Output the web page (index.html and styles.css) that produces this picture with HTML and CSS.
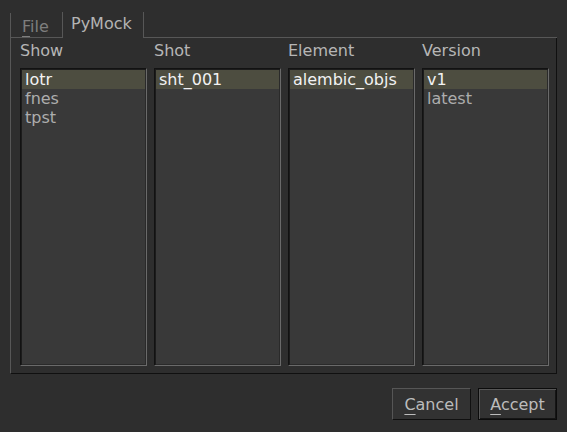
FILE: index.html
```html
<!DOCTYPE html>
<html>
<head>
<meta charset="utf-8">
<link rel="stylesheet" href="styles.css">
</head>
<body>
<div class="dialog">
  <div class="tabbar">
    <div class="tab tab-inactive"><span><u>F</u>ile</span></div>
    <div class="tab tab-active"><span>PyMock</span></div>
    <div class="tab-filler"></div>
  </div>
  <div class="pane">
    <div class="columns">
      <div class="column">
        <div class="label">Show</div>
        <div class="list">
          <div class="item selected">lotr</div>
          <div class="item">fnes</div>
          <div class="item">tpst</div>
        </div>
      </div>
      <div class="column">
        <div class="label">Shot</div>
        <div class="list">
          <div class="item selected">sht_001</div>
        </div>
      </div>
      <div class="column">
        <div class="label">Element</div>
        <div class="list">
          <div class="item selected">alembic_objs</div>
        </div>
      </div>
      <div class="column">
        <div class="label">Version</div>
        <div class="list">
          <div class="item selected">v1</div>
          <div class="item">latest</div>
        </div>
      </div>
    </div>
  </div>
  <div class="buttons">
    <div class="button"><span><u>C</u>ancel</span></div>
    <div class="button default"><span><u>A</u>ccept</span></div>
  </div>
</div>
</body>
</html>
```
FILE: styles.css
```css
html, body {
  margin: 0;
  padding: 0;
  background: #2e2e2e;
}
body {
  width: 567px;
  height: 432px;
  overflow: hidden;
  font-family: "DejaVu Sans", sans-serif;
  font-size: 16px;
}
.dialog {
  padding-top: 12px;
}
u {
  text-decoration: underline;
  text-underline-offset: 4px;
  text-decoration-thickness: 1px;
}
.tabbar {
  display: flex;
  height: 26px;
  margin: 0 10px;
}
.tab {
  box-sizing: border-box;
  line-height: 20px;
}
.tab-inactive {
  width: 52px;
  margin-top: 1px;
  border-left: 1px solid #575757;
  border-bottom: 1px solid #575757;
  padding: 3.5px 0 0 11px;
  color: #7e7e7e;
}
.tab-active {
  width: 82px;
  border-left: 1px solid #575757;
  border-right: 1px solid #575757;
  padding: 2px 0 0 8px;
  color: #b4b4b4;
}
.tab-filler {
  flex: 1;
  border-bottom: 1px solid #575757;
}
.pane {
  box-sizing: border-box;
  margin: 0 10px;
  height: 336px;
  border-left: 1px solid #575757;
  border-right: 1px solid #101010;
  border-bottom: 1px solid #101010;
  padding: 3px 7px 7px 9px;
}
.columns {
  display: grid;
  grid-template-columns: repeat(4, 127px);
  column-gap: 7px;
}
.column {
  display: flex;
  flex-direction: column;
}
.label {
  line-height: 20px;
  height: 20px;
  color: #b6b6b6;
  margin-bottom: 7px;
}
.list {
  box-sizing: border-box;
  height: 298px;
  background: #393939;
  border-style: solid;
  border-width: 1px;
  border-color: #121212 #6a6a6a #6a6a6a #121212;
  box-shadow: inset 1px 1px 0 #1c1c1c, inset -1px -1px 0 #2a2a2a;
  padding: 1px;
}
.item {
  height: 19px;
  line-height: 19px;
  padding-left: 3px;
  color: #adadad;
  white-space: nowrap;
}
.item.selected {
  background: #4d4d40;
  color: #f2f2f2;
}
.buttons {
  display: flex;
  justify-content: flex-end;
  gap: 7px;
  margin-top: 14px;
  padding-right: 10px;
}
.button {
  box-sizing: border-box;
  width: 79px;
  height: 32px;
  display: flex;
  align-items: center;
  justify-content: center;
  background: #323232;
  color: #bcbcbc;
  border-style: solid;
  border-width: 1px;
  border-color: #565656 #101010 #101010 #565656;
}
.button.default {
  border: 1px solid #0c0c0c;
  box-shadow: inset 1px 1px 0 #575757, inset -1px -1px 0 #151515;
}
```
